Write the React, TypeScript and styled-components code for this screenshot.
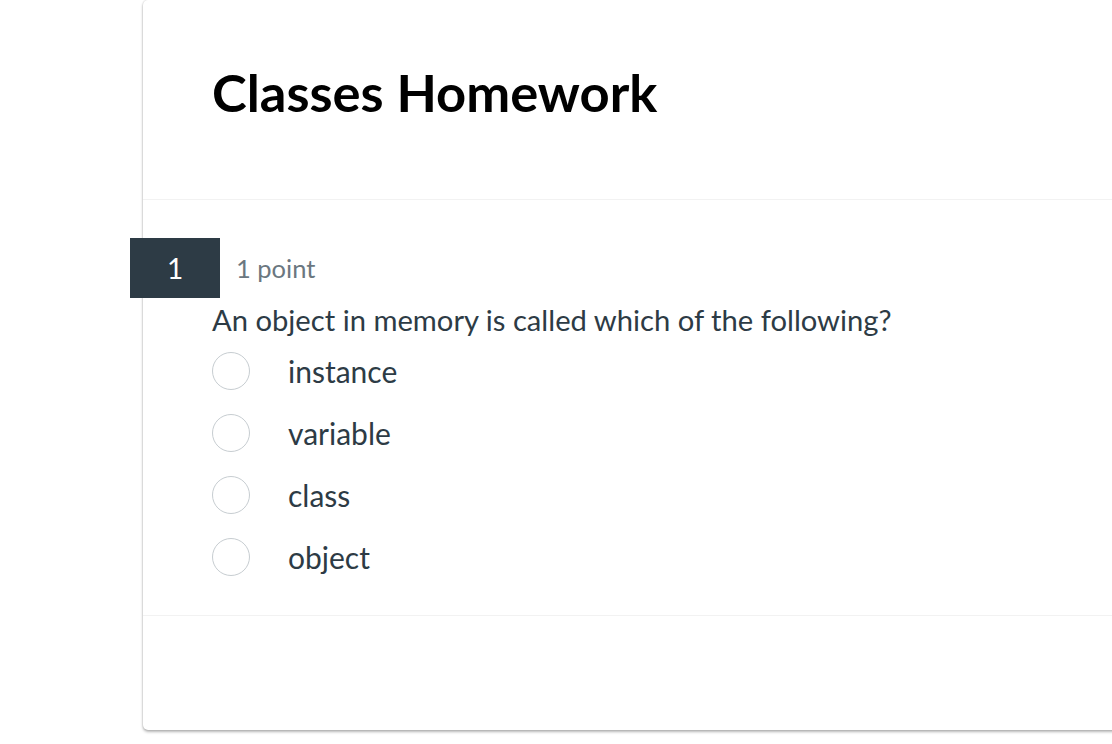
import React from "react";
import styled, { createGlobalStyle } from "styled-components";

const Global = createGlobalStyle`
  html, body { margin: 0; padding: 0; background: #ffffff; overflow: hidden; }
  body { font-family: Lato, "Open Sans", "Liberation Sans", sans-serif; color: #2d3b45; }
`;

const Page = styled.div`
  width: 1112px;
  height: 744px;
  padding-left: 143px;
  box-sizing: border-box;
  overflow: hidden;
`;

const Card = styled.div`
  width: 1100px;
  height: 730px;
  background: #ffffff;
  border-radius: 5px;
  box-shadow: 0 2px 3px rgba(0, 0, 0, 0.28), 0 0 2px rgba(0, 0, 0, 0.2);
  display: flex;
  flex-direction: column;
`;

const Header = styled.div`
  height: 200px;
  box-sizing: border-box;
  padding-left: 69px;
  padding-bottom: 16px;
  display: flex;
  align-items: center;
  border-bottom: 1px solid #f2f2f2;
`;

const Title = styled.h1`
  margin: 0;
  font-family: Lato, sans-serif;
  font-weight: 700;
  font-size: 52.5px;
  color: #000000;
`;

const Question = styled.div`
  height: 416px;
  box-sizing: border-box;
  padding-top: 38px;
  border-bottom: 1px solid #f2f2f2;
  display: flex;
  flex-direction: column;
`;

const QuestionHead = styled.div`
  display: flex;
  align-items: center;
  gap: 16px;
  margin-left: -13px;
`;

const NumberFlag = styled.div`
  width: 90px;
  height: 60px;
  background: #2d3b45;
  color: #ffffff;
  font-size: 28px;
  display: flex;
  align-items: center;
  justify-content: center;
`;

const Points = styled.div`
  font-size: 25.5px;
  color: #6b7780;
`;

const Body = styled.div`
  padding-left: 69px;
`;

const Prompt = styled.div`
  font-size: 29.2px;
  line-height: 40px;
  margin-top: 2px;
  color: #2d3b45;
`;

const Answers = styled.div`
  display: flex;
  flex-direction: column;
`;

const Answer = styled.label`
  display: flex;
  align-items: center;
  height: 62px;
  gap: 38px;
  font-size: 30px;
  color: #2d3b45;
`;

const Radio = styled.span`
  width: 38px;
  height: 38px;
  border-radius: 50%;
  border: 1px solid #c7cdd1;
  box-sizing: border-box;
  flex: 0 0 auto;
`;

const answers = ["instance", "variable", "class", "object"];

export default function App() {
  return (
    <>
      <Global />
      <Page>
        <Card>
          <Header>
            <Title>Classes Homework</Title>
          </Header>
          <Question>
            <QuestionHead>
              <NumberFlag>1</NumberFlag>
              <Points>1 point</Points>
            </QuestionHead>
            <Body>
              <Prompt>An object in memory is called which of the following?</Prompt>
              <Answers>
                {answers.map((a) => (
                  <Answer key={a}>
                    <Radio />
                    {a}
                  </Answer>
                ))}
              </Answers>
            </Body>
          </Question>
        </Card>
      </Page>
    </>
  );
}
